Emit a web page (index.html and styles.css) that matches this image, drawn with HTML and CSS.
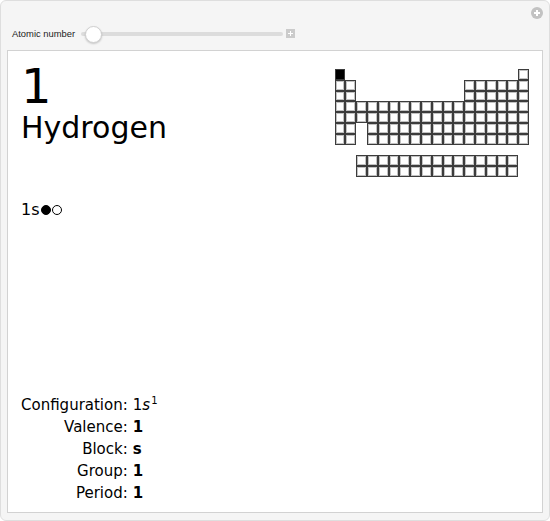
FILE: index.html
```html
<!DOCTYPE html>
<html lang="en">
  <head>
    <meta charset="UTF-8" />
    <meta name="viewport" content="width=device-width, initial-scale=1.0" />
    <title>Electron Configuration</title>
    <link rel="stylesheet" href="styles.css">
  </head>
  <body>
    <div class="frame">
      <span class="corner-btn"></span>

      <div class="controls">
        <span class="control-label">Atomic number</span>
        <div class="slider">
          <div class="slider-track"></div>
          <div class="slider-thumb"></div>
        </div>
        <span class="plus-btn"></span>
      </div>

      <div class="panel">
        <div class="header">
          <div class="element">
            <div class="element-number">1</div>
            <div class="element-name">Hydrogen</div>
          </div>
          <div class="ptable" id="ptable"></div>
        </div>

        <div class="orbitals">
          1s<span class="electron filled"></span><span class="electron"></span>
        </div>

        <div class="info">
          <span class="info-label">Configuration:</span>
          <span class="info-value">1<i>s</i><sup>1</sup></span>
          <span class="info-label">Valence:</span>
          <span class="info-value"><b>1</b></span>
          <span class="info-label">Block:</span>
          <span class="info-value"><b>s</b></span>
          <span class="info-label">Group:</span>
          <span class="info-value"><b>1</b></span>
          <span class="info-label">Period:</span>
          <span class="info-value"><b>1</b></span>
        </div>
      </div>
    </div>

    <script>
      function range(a, b) {
        const out = [];
        for (let i = a; i <= b; i++) out.push(i);
        return out;
      }

      // row -> columns that hold an element
      const layout = {
        1: [1, 18],
        2: [1, 2].concat(range(13, 18)),
        3: [1, 2].concat(range(13, 18)),
        4: range(1, 18),
        5: range(1, 18),
        6: [1, 2].concat(range(4, 18)),
        7: [1, 2].concat(range(4, 18)),
        9: range(3, 17),
        10: range(3, 17),
      };

      const table = document.getElementById("ptable");
      Object.keys(layout).forEach((row) => {
        layout[row].forEach((col) => {
          const cell = document.createElement("div");
          cell.classList.add("cell");
          if (row == 1 && col == 1) cell.classList.add("cell-active");
          cell.style.gridRow = row;
          cell.style.gridColumn = col;
          table.appendChild(cell);
        });
      });
    </script>
  </body>
</html>
```

FILE: styles.css
```css
* {
  margin: 0;
  padding: 0;
  box-sizing: border-box;
}

body {
  background-color: white;
  font-family: "DejaVu Sans", Verdana, sans-serif;
  color: black;
}

.frame {
  position: relative;
  width: 550px;
  height: 521px;
  background-color: #f5f5f5;
  border: 1px solid #dedede;
  border-radius: 6px;
  padding: 0 6px 7px 6px;
  display: flex;
  flex-direction: column;
}

.corner-btn {
  position: absolute;
  top: 6px;
  right: 6px;
  width: 12px;
  height: 12px;
  border-radius: 50%;
  background-color: #c2c2c2;
}

.corner-btn::before,
.corner-btn::after {
  content: "";
  position: absolute;
  background-color: white;
}

.corner-btn::before {
  left: 3px;
  top: 5px;
  width: 6px;
  height: 2px;
}

.corner-btn::after {
  left: 5px;
  top: 3px;
  width: 2px;
  height: 6px;
}

.controls {
  height: 49px;
  padding: 16px 0 0 5px;
  display: flex;
  align-items: center;
}

.control-label {
  font-family: "Liberation Sans", Arial, sans-serif;
  font-size: 9.4px;
  color: #222;
}

.slider {
  position: relative;
  width: 202px;
  height: 16px;
  margin-left: 6px;
  display: flex;
  align-items: center;
}

.slider-track {
  width: 100%;
  height: 4px;
  border-radius: 2px;
  background-color: #dcdcdc;
}

.slider-thumb {
  position: absolute;
  left: 4px;
  top: 0;
  width: 17px;
  height: 17px;
  border-radius: 50%;
  background-color: white;
  border: 1px solid #d0d0d0;
  box-shadow: 0 1px 2px rgba(0, 0, 0, 0.2);
}

.plus-btn {
  position: relative;
  width: 9px;
  height: 9px;
  margin-left: 3px;
  background-color: #cbcbcb;
}

.plus-btn::before,
.plus-btn::after {
  content: "";
  position: absolute;
  background-color: white;
}

.plus-btn::before {
  left: 2px;
  top: 4px;
  width: 5px;
  height: 1px;
}

.plus-btn::after {
  left: 4px;
  top: 2px;
  width: 1px;
  height: 5px;
}

.panel {
  flex: 1;
  background-color: white;
  border: 1px solid #d2d2d2;
  padding: 11px 13px 8px 13px;
  display: flex;
  flex-direction: column;
}

.header {
  display: flex;
  justify-content: space-between;
  align-items: flex-start;
}

.element-number {
  font-size: 48px;
  line-height: 48px;
}

.element-name {
  font-size: 30px;
  line-height: 30px;
  margin-top: 3px;
}

.ptable {
  display: grid;
  grid-template-columns: repeat(18, 10.8px);
  grid-template-rows: repeat(10, 10.8px);
  margin-top: 7px;
}

.cell {
  border: 1px solid #3c3c3c;
  box-shadow: inset 0 0 0 1px #c2c2c2;
  background-color: white;
}

.cell-active {
  background-color: black;
  box-shadow: none;
}

.orbitals {
  font-size: 16px;
  line-height: 19px;
  margin-top: 23px;
}

.electron {
  display: inline-block;
  width: 10px;
  height: 10px;
  border: 1px solid black;
  border-radius: 50%;
  margin-left: 1px;
}

.electron.filled {
  background-color: black;
}

.info {
  margin-top: auto;
  display: grid;
  grid-template-columns: auto auto;
  justify-content: start;
  column-gap: 5px;
  font-size: 15px;
  line-height: 22px;
}

.info-label {
  text-align: right;
}

.info-value sup {
  font-size: 10px;
  line-height: 0;
  vertical-align: 6px;
  margin-left: 1px;
}
```
